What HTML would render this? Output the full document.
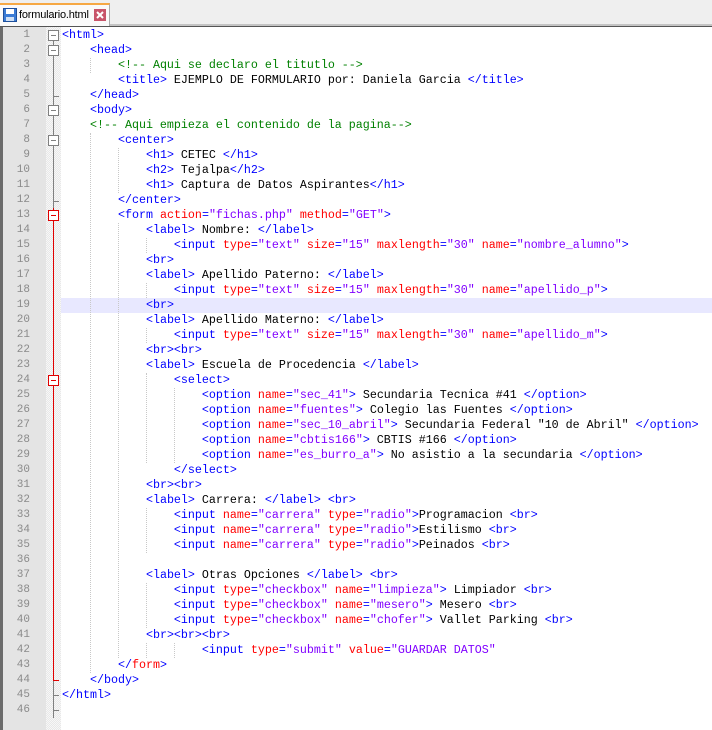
<!DOCTYPE html>
<html><head><style>
body{margin:0;width:712px;height:730px;overflow:hidden;background:#fff;position:relative;font-family:"Liberation Sans",sans-serif}
#bar{position:absolute;left:0;top:0;width:712px;height:24px;background:#efefef}
#l1{position:absolute;left:0;top:24px;width:712px;height:2px;background:#c4c4c4}
#l2{position:absolute;left:0;top:26px;width:712px;height:1px;background:#555}
#tab{position:absolute;left:0;top:3px;width:110px;height:23px;background:#fafafa;border-top:2px solid #f6a844;border-right:1px solid #aaa;box-sizing:border-box}
#tab .t{position:absolute;left:19px;top:4px;font-size:11px;color:#000;letter-spacing:-0.2px}
#lb{position:absolute;left:0;top:27px;width:3px;height:703px;background:#6b6b6b}
#num{position:absolute;left:3px;top:27px;width:43px;height:703px;background:#e4e4e4}
#fold{position:absolute;left:46px;top:27px;width:15px;height:703px;background:repeating-conic-gradient(#f7f7f7 0 25%,#e8e8e8 0 50%) 0 0/2px 2px}
#cur{position:absolute;left:61px;top:298px;width:651px;height:15px;background:#e8e8ff}
pre{margin:0;position:absolute;left:62px;top:28px;font-family:"Liberation Mono",monospace;font-size:11.67px;line-height:15px;color:#000}
#nums{position:absolute;left:3px;top:28px;width:27px;text-align:right;font-family:"Liberation Mono",monospace;font-size:11px;line-height:15px;color:#8a8a8a;margin:0}
.b{color:#0000ff}.r{color:#ff0000}.p{color:#8000ff}.g{color:#008000}
.fb{position:absolute;left:48px;width:9px;height:9px;border:1px solid #808080;background:#fff;box-sizing:content-box}
.fb::after{content:"";position:absolute;left:2px;top:4px;width:5px;height:1px;background:#808080}
.fb.rd{border-color:#e00000}.fb.rd::after{background:#e00000}
.v{position:absolute;left:53px;width:1px;background:#808080}
.h{position:absolute;left:53px;height:1px;width:6px;background:#808080}
.g2{position:absolute;width:0;border-left:1px dotted #c8c8c8}
</style></head><body>
<div id="bar"></div><div id="l1"></div><div id="l2"></div>
<div id="tab">
<svg style="position:absolute;left:3px;top:3px" width="14" height="14" viewBox="0 0 14 14"><rect x="0.5" y="0.5" width="13" height="13" fill="#3a7bd5" stroke="#1e4f9a"/><rect x="3" y="1" width="8" height="5" fill="#fff"/><rect x="3" y="9" width="8" height="4" fill="#cfe0f5"/></svg>
<span class="t">formulario.html</span>
<svg style="position:absolute;left:94px;top:4px" width="12" height="12" viewBox="0 0 12 12"><rect width="12" height="12" fill="#c8556a"/><path d="M3 3L9 9M9 3L3 9" stroke="#fff" stroke-width="2"/></svg>
</div>
<div id="lb"></div><div id="num"></div><div id="fold"></div><div id="cur"></div>
<div class="g2" style="left:90px;top:58px;height:15px"></div>
<div class="g2" style="left:90px;top:133px;height:540px"></div>
<div class="g2" style="left:118px;top:148px;height:45px"></div>
<div class="g2" style="left:118px;top:223px;height:435px"></div>
<div class="g2" style="left:146px;top:238px;height:15px"></div>
<div class="g2" style="left:146px;top:283px;height:15px"></div>
<div class="g2" style="left:146px;top:328px;height:15px"></div>
<div class="g2" style="left:146px;top:373px;height:90px"></div>
<div class="g2" style="left:174px;top:388px;height:75px"></div>
<div class="g2" style="left:146px;top:508px;height:45px"></div>
<div class="g2" style="left:146px;top:583px;height:45px"></div>
<div class="g2" style="left:146px;top:643px;height:15px"></div>
<div class="g2" style="left:174px;top:643px;height:15px"></div>
<div class="v" style="top:40px;height:678px"></div>
<div class="v" style="top:208px;height:472px;background:#e00000;width:1px"></div>
<div class="h" style="top:96px"></div>
<div class="h" style="top:201px"></div>
<div class="h" style="top:680px;background:#e00000"></div>
<div class="h" style="top:695px"></div>
<div class="h" style="top:710px"></div>
<div class="fb" style="top:30px"></div>
<div class="fb" style="top:45px"></div>
<div class="fb" style="top:105px"></div>
<div class="fb" style="top:135px"></div>
<div class="fb rd" style="top:210px"></div>
<div class="fb rd" style="top:375px"></div>
<pre id="nums">1
2
3
4
5
6
7
8
9
10
11
12
13
14
15
16
17
18
19
20
21
22
23
24
25
26
27
28
29
30
31
32
33
34
35
36
37
38
39
40
41
42
43
44
45
46</pre>
<pre><span class="b">&lt;html&gt;</span>
    <span class="b">&lt;head&gt;</span>
        <span class="g">&lt;!-- Aqui se declaro el titutlo --&gt;</span>
        <span class="b">&lt;title&gt;</span> EJEMPLO DE FORMULARIO por: Daniela Garcia <span class="b">&lt;/title&gt;</span>
    <span class="b">&lt;/head&gt;</span>
    <span class="b">&lt;body&gt;</span>
    <span class="g">&lt;!-- Aqui empieza el contenido de la pagina--&gt;</span>
        <span class="b">&lt;center&gt;</span>
            <span class="b">&lt;h1&gt;</span> CETEC <span class="b">&lt;/h1&gt;</span>
            <span class="b">&lt;h2&gt;</span> Tejalpa<span class="b">&lt;/h2&gt;</span>
            <span class="b">&lt;h1&gt;</span> Captura de Datos Aspirantes<span class="b">&lt;/h1&gt;</span>
        <span class="b">&lt;/center&gt;</span>
        <span class="b">&lt;form</span> <span class="r">action</span><span class="b">=</span><span class="p">"fichas.php"</span> <span class="r">method</span><span class="b">=</span><span class="p">"GET"</span><span class="b">&gt;</span>
            <span class="b">&lt;label&gt;</span> Nombre: <span class="b">&lt;/label&gt;</span>
                <span class="b">&lt;input</span> <span class="r">type</span><span class="b">=</span><span class="p">"text"</span> <span class="r">size</span><span class="b">=</span><span class="p">"15"</span> <span class="r">maxlength</span><span class="b">=</span><span class="p">"30"</span> <span class="r">name</span><span class="b">=</span><span class="p">"nombre_alumno"</span><span class="b">&gt;</span>
            <span class="b">&lt;br&gt;</span>
            <span class="b">&lt;label&gt;</span> Apellido Paterno: <span class="b">&lt;/label&gt;</span>
                <span class="b">&lt;input</span> <span class="r">type</span><span class="b">=</span><span class="p">"text"</span> <span class="r">size</span><span class="b">=</span><span class="p">"15"</span> <span class="r">maxlength</span><span class="b">=</span><span class="p">"30"</span> <span class="r">name</span><span class="b">=</span><span class="p">"apellido_p"</span><span class="b">&gt;</span>
            <span class="b">&lt;br&gt;</span>
            <span class="b">&lt;label&gt;</span> Apellido Materno: <span class="b">&lt;/label&gt;</span>
                <span class="b">&lt;input</span> <span class="r">type</span><span class="b">=</span><span class="p">"text"</span> <span class="r">size</span><span class="b">=</span><span class="p">"15"</span> <span class="r">maxlength</span><span class="b">=</span><span class="p">"30"</span> <span class="r">name</span><span class="b">=</span><span class="p">"apellido_m"</span><span class="b">&gt;</span>
            <span class="b">&lt;br&gt;&lt;br&gt;</span>
            <span class="b">&lt;label&gt;</span> Escuela de Procedencia <span class="b">&lt;/label&gt;</span>
                <span class="b">&lt;select&gt;</span>
                    <span class="b">&lt;option</span> <span class="r">name</span><span class="b">=</span><span class="p">"sec_41"</span><span class="b">&gt;</span> Secundaria Tecnica #41 <span class="b">&lt;/option&gt;</span>
                    <span class="b">&lt;option</span> <span class="r">name</span><span class="b">=</span><span class="p">"fuentes"</span><span class="b">&gt;</span> Colegio las Fuentes <span class="b">&lt;/option&gt;</span>
                    <span class="b">&lt;option</span> <span class="r">name</span><span class="b">=</span><span class="p">"sec_10_abril"</span><span class="b">&gt;</span> Secundaria Federal "10 de Abril" <span class="b">&lt;/option&gt;</span>
                    <span class="b">&lt;option</span> <span class="r">name</span><span class="b">=</span><span class="p">"cbtis166"</span><span class="b">&gt;</span> CBTIS #166 <span class="b">&lt;/option&gt;</span>
                    <span class="b">&lt;option</span> <span class="r">name</span><span class="b">=</span><span class="p">"es_burro_a"</span><span class="b">&gt;</span> No asistio a la secundaria <span class="b">&lt;/option&gt;</span>
                <span class="b">&lt;/select&gt;</span>
            <span class="b">&lt;br&gt;&lt;br&gt;</span>
            <span class="b">&lt;label&gt;</span> Carrera: <span class="b">&lt;/label&gt;</span> <span class="b">&lt;br&gt;</span>
                <span class="b">&lt;input</span> <span class="r">name</span><span class="b">=</span><span class="p">"carrera"</span> <span class="r">type</span><span class="b">=</span><span class="p">"radio"</span><span class="b">&gt;</span>Programacion <span class="b">&lt;br&gt;</span>
                <span class="b">&lt;input</span> <span class="r">name</span><span class="b">=</span><span class="p">"carrera"</span> <span class="r">type</span><span class="b">=</span><span class="p">"radio"</span><span class="b">&gt;</span>Estilismo <span class="b">&lt;br&gt;</span>
                <span class="b">&lt;input</span> <span class="r">name</span><span class="b">=</span><span class="p">"carrera"</span> <span class="r">type</span><span class="b">=</span><span class="p">"radio"</span><span class="b">&gt;</span>Peinados <span class="b">&lt;br&gt;</span>

            <span class="b">&lt;label&gt;</span> Otras Opciones <span class="b">&lt;/label&gt;</span> <span class="b">&lt;br&gt;</span>
                <span class="b">&lt;input</span> <span class="r">type</span><span class="b">=</span><span class="p">"checkbox"</span> <span class="r">name</span><span class="b">=</span><span class="p">"limpieza"</span><span class="b">&gt;</span> Limpiador <span class="b">&lt;br&gt;</span>
                <span class="b">&lt;input</span> <span class="r">type</span><span class="b">=</span><span class="p">"checkbox"</span> <span class="r">name</span><span class="b">=</span><span class="p">"mesero"</span><span class="b">&gt;</span> Mesero <span class="b">&lt;br&gt;</span>
                <span class="b">&lt;input</span> <span class="r">type</span><span class="b">=</span><span class="p">"checkbox"</span> <span class="r">name</span><span class="b">=</span><span class="p">"chofer"</span><span class="b">&gt;</span> Vallet Parking <span class="b">&lt;br&gt;</span>
            <span class="b">&lt;br&gt;&lt;br&gt;&lt;br&gt;</span>
                    <span class="b">&lt;input</span> <span class="r">type</span><span class="b">=</span><span class="p">"submit"</span> <span class="r">value</span><span class="b">=</span><span class="p">"GUARDAR DATOS"</span>
        <span class="b">&lt;/</span><span class="r">form</span><span class="b">&gt;</span>
    <span class="b">&lt;/body&gt;</span>
<span class="b">&lt;/html&gt;</span>
</pre>
</body></html>
